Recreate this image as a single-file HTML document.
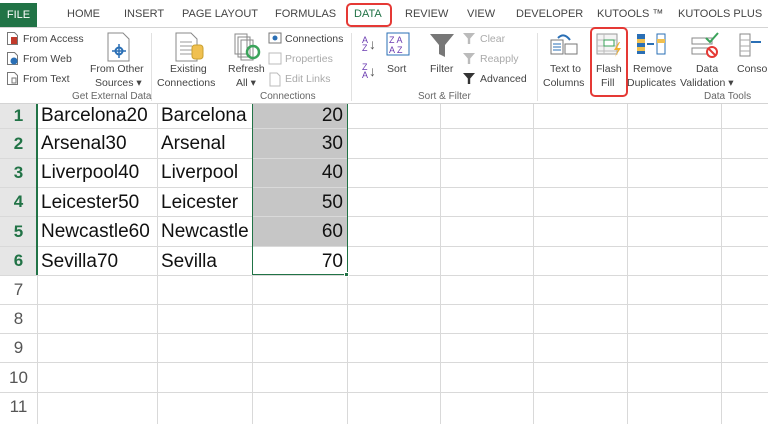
<!DOCTYPE html>
<html><head><meta charset="utf-8"><style>
*{margin:0;padding:0;box-sizing:border-box}
body{width:768px;height:420px;overflow:hidden;background:#fff;font-family:"Liberation Sans",sans-serif;position:relative}
.a{position:absolute;white-space:nowrap}
.tab{top:8px;font-size:11px;color:#444}
.rb{font-size:10.5px;color:#444}
.dis{color:#aaa}
.gl{top:91px;font-size:10px;color:#666}
.sep{position:absolute;top:33px;width:1px;height:68px;background:#e1e1e1}
.hl{position:absolute;left:0;width:768px;height:1px;background:#d9d9d9}
.vl{position:absolute;top:104px;width:1px;height:320px;background:#d9d9d9}
.rh{position:absolute;left:0;width:37px;text-align:center;font-size:17px}
.c{position:absolute;font-size:19px;color:#111}
</style></head><body>
<div class="a" style="left:0;top:3px;width:37px;height:24px;background:#217346;color:#fff;font-size:11px;text-align:center;line-height:24px">FILE</div>
<div class="a tab" style="left:67px">HOME</div>
<div class="a tab" style="left:124px">INSERT</div>
<div class="a tab" style="left:182px">PAGE LAYOUT</div>
<div class="a tab" style="left:275px">FORMULAS</div>
<div class="a" style="left:346px;top:3px;width:46px;height:24px;border:2px solid #e53935;border-radius:5px;background:#fff"></div>
<div class="a tab" style="left:354px;color:#217346">DATA</div>
<div class="a tab" style="left:405px">REVIEW</div>
<div class="a tab" style="left:467px">VIEW</div>
<div class="a tab" style="left:516px">DEVELOPER</div>
<div class="a tab" style="left:597px">KUTOOLS ™</div>
<div class="a tab" style="left:678px">KUTOOLS PLUS</div>
<div class="a" style="left:0;top:27px;width:768px;height:1px;background:#d4d4d4"></div>
<svg class="a" style="left:6px;top:31px" width="14" height="60"><g fill="none" stroke="#777"><path d="M1.5 1.5h7l3 3v9h-10z"/><path d="M1.5 21.5h7l3 3v9h-10z"/><path d="M1.5 41.5h7l3 3v9h-10z"/></g><rect x="5" y="6" width="6" height="7" fill="#c0392b"/><circle cx="8" cy="30" r="3.5" fill="#2a6fb5"/><rect x="6" y="47" width="4" height="5" fill="none" stroke="#777"/></svg>
<div class="a rb" style="left:23px;top:33px">From Access</div>
<div class="a rb" style="left:23px;top:53px">From Web</div>
<div class="a rb" style="left:23px;top:73px">From Text</div>
<svg class="a" style="left:106px;top:32px" width="26" height="30"><path d="M2 1h15l6 6v22H2z" fill="#fff" stroke="#888"/><circle cx="13" cy="19" r="3.5" fill="none" stroke="#2a6fb5" stroke-width="2"/><path d="M13 12v14M6 19h14" stroke="#2a6fb5" stroke-width="1.5"/></svg>
<div class="a rb" style="left:90px;top:63px">From Other</div>
<div class="a rb" style="left:95px;top:77px">Sources ▾</div>
<div class="sep" style="left:151px"></div>
<svg class="a" style="left:172px;top:32px" width="34" height="30"><path d="M4 1h15l6 6v22H4z" fill="#fff" stroke="#888"/><path d="M8 10h12M8 14h12M8 18h12M8 22h12" stroke="#999"/><rect x="20" y="13" width="11" height="14" rx="3" fill="#f0c050" stroke="#c9a030"/></svg>
<div class="a rb" style="left:170px;top:63px">Existing</div>
<div class="a rb" style="left:157px;top:77px">Connections</div>
<div class="a gl" style="left:72px">Get External Data</div>
<svg class="a" style="left:233px;top:32px" width="30" height="30"><path d="M2 2h12v20H2zM5 5h12v20H5zM8 8h12v20H8z" fill="#fff" stroke="#888"/><circle cx="20" cy="20" r="6" fill="none" stroke="#3aa35a" stroke-width="2.5"/></svg>
<div class="a rb" style="left:228px;top:63px">Refresh</div>
<div class="a rb" style="left:236px;top:77px">All ▾</div>
<svg class="a" style="left:268px;top:32px" width="14" height="56"><rect x="1" y="1" width="12" height="10" fill="#fff" stroke="#777"/><circle cx="7" cy="6" r="2.5" fill="#2a6fb5"/><rect x="1" y="21" width="12" height="11" fill="#fff" stroke="#bbb"/><path d="M2 41h7l3 3v10H2z" fill="#fff" stroke="#bbb"/></svg>
<div class="a rb" style="left:285px;top:33px">Connections</div>
<div class="a rb dis" style="left:285px;top:53px">Properties</div>
<div class="a rb dis" style="left:285px;top:73px">Edit Links</div>
<div class="a gl" style="left:260px">Connections</div>
<div class="sep" style="left:351px"></div>
<div class="a" style="left:362px;top:36px;font-size:9px;color:#6a3ab0;line-height:8px">A<br>Z</div>
<div class="a" style="left:369px;top:36px;font-size:14px;color:#555">↓</div>
<div class="a" style="left:362px;top:63px;font-size:9px;color:#6a3ab0;line-height:8px">Z<br>A</div>
<div class="a" style="left:369px;top:63px;font-size:14px;color:#555">↓</div>
<svg class="a" style="left:386px;top:32px" width="24" height="24"><rect x="1" y="1" width="22" height="22" fill="#fff" stroke="#2a6fb5"/><text x="3" y="11" font-size="9" fill="#6a3ab0" font-family="Liberation Sans">Z A</text><text x="3" y="21" font-size="9" fill="#6a3ab0" font-family="Liberation Sans">A Z</text></svg>
<div class="a rb" style="left:387px;top:63px">Sort</div>
<svg class="a" style="left:429px;top:33px" width="26" height="26"><path d="M1 1h24L16 12v12l-6-3V12z" fill="#777"/></svg>
<div class="a rb" style="left:430px;top:63px">Filter</div>
<div class="a" style="left:463px;top:33px;width:12px;height:11px;background:#bbb;clip-path:polygon(0 0,100% 0,60% 50%,60% 100%,40% 100%,40% 50%)"></div>
<div class="a rb dis" style="left:480px;top:33px">Clear</div>
<div class="a" style="left:463px;top:53px;width:12px;height:11px;background:#bbb;clip-path:polygon(0 0,100% 0,60% 50%,60% 100%,40% 100%,40% 50%)"></div>
<div class="a rb dis" style="left:480px;top:53px">Reapply</div>
<div class="a" style="left:463px;top:73px;width:12px;height:11px;background:#333;clip-path:polygon(0 0,100% 0,60% 50%,60% 100%,40% 100%,40% 50%)"></div>
<div class="a rb" style="left:480px;top:73px">Advanced</div>
<div class="a gl" style="left:418px">Sort &amp; Filter</div>
<div class="sep" style="left:537px"></div>
<svg class="a" style="left:550px;top:32px" width="30" height="24"><rect x="1" y="8" width="12" height="14" fill="#fff" stroke="#777"/><path d="M3 12h8M3 15h8M3 18h8" stroke="#2a6fb5"/><rect x="15" y="12" width="12" height="10" fill="#fff" stroke="#777"/><path d="M8 6q6-6 12 2" fill="none" stroke="#2a6fb5" stroke-width="2"/></svg>
<div class="a rb" style="left:550px;top:63px">Text to</div>
<div class="a rb" style="left:543px;top:77px">Columns</div>
<div class="a" style="left:590px;top:27px;width:38px;height:70px;border:2px solid #e53935;border-radius:5px"></div>
<svg class="a" style="left:595px;top:32px" width="28" height="26"><rect x="2" y="2" width="20" height="20" fill="#f4f4f4" stroke="#999"/><path d="M2 8h20M2 14h20M2 19h20M9 2v20" stroke="#bbb"/><rect x="9" y="8" width="10" height="6" fill="#fff" stroke="#3aa35a"/><path d="M24 10l-5 8h4l-3 7 6-9h-4l3-6z" fill="#f0b030"/></svg>
<div class="a rb" style="left:596px;top:63px">Flash</div>
<div class="a rb" style="left:601px;top:77px">Fill</div>
<svg class="a" style="left:635px;top:32px" width="34" height="24"><rect x="2" y="2" width="8" height="20" fill="#2a6fb5"/><rect x="2" y="7" width="8" height="4" fill="#f0c050"/><rect x="2" y="15" width="8" height="4" fill="#f0c050"/><path d="M12 12h7" stroke="#2a6fb5" stroke-width="2"/><rect x="22" y="2" width="8" height="20" fill="#fff" stroke="#2a6fb5"/><rect x="22" y="7" width="8" height="4" fill="#f0c050"/></svg>
<div class="a rb" style="left:633px;top:63px">Remove</div>
<div class="a rb" style="left:627px;top:77px">Duplicates</div>
<svg class="a" style="left:690px;top:32px" width="30" height="26"><rect x="2" y="6" width="20" height="6" fill="#fff" stroke="#888"/><rect x="2" y="16" width="20" height="6" fill="#fff" stroke="#888"/><path d="M16 6l4 4 8-9" fill="none" stroke="#3aa35a" stroke-width="2"/><circle cx="22" cy="20" r="5" fill="#fff" stroke="#e53935" stroke-width="2"/><path d="M19 17l6 6" stroke="#e53935" stroke-width="2"/></svg>
<div class="a rb" style="left:696px;top:63px">Data</div>
<div class="a rb" style="left:680px;top:77px">Validation ▾</div>
<svg class="a" style="left:738px;top:32px" width="30" height="26"><rect x="2" y="2" width="10" height="22" fill="#fff" stroke="#888"/><path d="M2 8h10M2 14h10M2 19h10" stroke="#aaa"/><path d="M13 10h10" stroke="#2a6fb5" stroke-width="2"/></svg>
<div class="a rb" style="left:737px;top:63px">Conso</div>
<div class="a gl" style="left:704px">Data Tools</div>
<div class="a" style="left:0;top:103px;width:768px;height:1px;background:#d4d4d4"></div>
<div class="a" style="left:0;top:104px;width:37px;height:171px;background:#e6e6e6"></div>
<div class="a" style="left:252px;top:104px;width:95px;height:142px;background:#c6c6c6"></div>
<div class="hl" style="top:128px"></div><div class="hl" style="top:158px"></div><div class="hl" style="top:187px"></div><div class="hl" style="top:216px"></div><div class="hl" style="top:246px"></div><div class="hl" style="top:275px"></div><div class="hl" style="top:304px"></div><div class="hl" style="top:333px"></div><div class="hl" style="top:362px"></div><div class="hl" style="top:392px"></div>
<div class="vl" style="left:37px"></div><div class="vl" style="left:157px"></div><div class="vl" style="left:252px"></div><div class="vl" style="left:347px"></div><div class="vl" style="left:440px"></div><div class="vl" style="left:533px"></div><div class="vl" style="left:627px"></div><div class="vl" style="left:721px"></div>
<div class="a" style="left:36px;top:104px;width:2px;height:171px;background:#217346"></div>
<div class="a" style="left:252px;top:104px;width:96px;height:171px;border:1.5px solid #217346;border-top:none"></div>
<div class="a" style="left:344px;top:272px;width:5px;height:5px;background:#217346;border:1px solid #fff"></div>
<div class="rh" style="top:106px;color:#217346;font-weight:bold">1</div>
<div class="rh" style="top:134px;color:#217346;font-weight:bold">2</div>
<div class="rh" style="top:163px;color:#217346;font-weight:bold">3</div>
<div class="rh" style="top:192px;color:#217346;font-weight:bold">4</div>
<div class="rh" style="top:222px;color:#217346;font-weight:bold">5</div>
<div class="rh" style="top:251px;color:#217346;font-weight:bold">6</div>
<div class="rh" style="top:280px;color:#555">7</div>
<div class="rh" style="top:309px;color:#555">8</div>
<div class="rh" style="top:338px;color:#555">9</div>
<div class="rh" style="top:368px;color:#555">10</div>
<div class="rh" style="top:397px;color:#555">11</div>
<div class="c" style="left:41px;top:105px">Barcelona20</div><div class="c" style="left:161px;top:105px">Barcelona</div><div class="c" style="left:252px;top:105px;width:91px;text-align:right">20</div>
<div class="c" style="left:41px;top:133px">Arsenal30</div><div class="c" style="left:161px;top:133px">Arsenal</div><div class="c" style="left:252px;top:133px;width:91px;text-align:right">30</div>
<div class="c" style="left:41px;top:162px">Liverpool40</div><div class="c" style="left:161px;top:162px">Liverpool</div><div class="c" style="left:252px;top:162px;width:91px;text-align:right">40</div>
<div class="c" style="left:41px;top:192px">Leicester50</div><div class="c" style="left:161px;top:192px">Leicester</div><div class="c" style="left:252px;top:192px;width:91px;text-align:right">50</div>
<div class="c" style="left:41px;top:221px">Newcastle60</div><div class="c" style="left:161px;top:221px;width:91px;overflow:hidden">Newcastle</div><div class="c" style="left:252px;top:221px;width:91px;text-align:right">60</div>
<div class="c" style="left:41px;top:251px">Sevilla70</div><div class="c" style="left:161px;top:251px">Sevilla</div><div class="c" style="left:252px;top:251px;width:91px;text-align:right">70</div>
</body></html>
